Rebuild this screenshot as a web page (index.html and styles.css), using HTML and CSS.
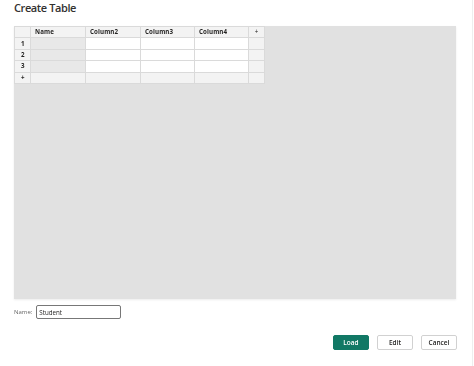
FILE: index.html
```html
<!DOCTYPE html>
<html lang="en">
<head>
    <meta charset="UTF-8">
    <title>Create Table</title>
    <link rel="stylesheet" href="styles.css">
</head>
<body>
    <div class="dialog">
        <h1 class="title">Create Table</h1>

        <div class="grid-area">
            <table class="sheet">
                <colgroup>
                    <col class="w-num">
                    <col class="w-wide">
                    <col class="w-wide">
                    <col class="w-mid">
                    <col class="w-mid">
                    <col class="w-num">
                </colgroup>
                <tr class="head">
                    <th class="num"></th>
                    <th>Name</th>
                    <th>Column2</th>
                    <th>Column3</th>
                    <th>Column4</th>
                    <th class="add">+</th>
                </tr>
                <tr>
                    <td class="num">1</td>
                    <td class="name-col"></td>
                    <td></td><td></td><td></td>
                    <td class="add"></td>
                </tr>
                <tr>
                    <td class="num">2</td>
                    <td class="name-col"></td>
                    <td></td><td></td><td></td>
                    <td class="add"></td>
                </tr>
                <tr>
                    <td class="num">3</td>
                    <td class="name-col"></td>
                    <td></td><td></td><td></td>
                    <td class="add"></td>
                </tr>
                <tr class="new-row">
                    <td class="num">+</td>
                    <td></td><td></td><td></td><td></td>
                    <td class="add"></td>
                </tr>
            </table>
        </div>

        <div class="name-row">
            <label for="tableName">Name:</label>
            <input id="tableName" type="text" value="Student">
        </div>

        <div class="actions">
            <button class="btn primary">Load</button>
            <button class="btn">Edit</button>
            <button class="btn">Cancel</button>
        </div>
    </div>
    <div class="edge"></div>
</body>
</html>
```

FILE: styles.css
```css
body {
    margin: 0;
    font-family: "Open Sans", "Noto Sans", sans-serif;
    background: #fff;
    color: #252423;
    width: 474px;
    height: 366px;
    overflow: hidden;
}
.dialog {
    padding: 0 18px 0 14px;
}
.title {
    margin: 0;
    padding-top: 1px;
    font-size: 11px;
    font-weight: 600;
    line-height: 13px;
    height: 25px;
    letter-spacing: -0.4px;
    color: #323130;
}
.grid-area {
    background: #e1e1e1;
    height: 273px;
    box-shadow: 0 1px 2px rgba(0,0,0,0.08);
    will-change: transform;
}
.sheet {
    border-collapse: collapse;
    font-size: 6.2px;
    letter-spacing: 0.1px;
    font-weight: 700;
    table-layout: fixed;
    width: 250px;
    color: #252423;
}
.w-num { width: 16px; }
.w-wide { width: 55px; }
.w-mid { width: 54px; }
.sheet th,
.sheet td {
    border: 1px solid #dadada;
    height: 10.4px;
    padding: 0 0 0 4px;
    text-align: left;
    background: #fff;
    line-height: 10px;
    overflow: hidden;
    white-space: nowrap;
}
.sheet th {
    background: #f3f3f3;
}
.sheet .num {
    background: #f3f3f3;
    padding-left: 6px;
}
.sheet td.name-col {
    background: #e8e8e8;
}
.sheet .add {
    padding: 0;
    text-align: center;
    background: #f3f3f3;
    font-weight: 400;
}
.sheet .new-row td {
    background: #f3f3f3;
}
.name-row {
    display: flex;
    align-items: center;
    gap: 4px;
    margin-top: 6px;
    font-size: 6px;
    color: #666;
    will-change: transform;
}
.name-row input {
    width: 79px;
    height: 10px;
    border: 1px solid #777;
    border-radius: 2px;
    font: 6.2px "Open Sans", sans-serif;
    color: #252423;
    padding: 1px 2px;
    outline: none;
}
.actions {
    display: flex;
    justify-content: flex-end;
    gap: 8px;
    margin-top: 16px;
    margin-right: -1px;
    will-change: transform;
}
.btn {
    width: 36px;
    height: 15px;
    border: 1px solid #d1d1d1;
    border-radius: 2px;
    background: #fff;
    font: 600 6.5px "Open Sans", sans-serif;
    color: #252423;
    padding: 0;
}
.primary {
    background: #117865;
    border-color: #117865;
    color: #fff;
}
.edge {
    position: absolute;
    top: 0;
    left: 472px;
    width: 1px;
    height: 366px;
    background: #eeeeee;
}
```
